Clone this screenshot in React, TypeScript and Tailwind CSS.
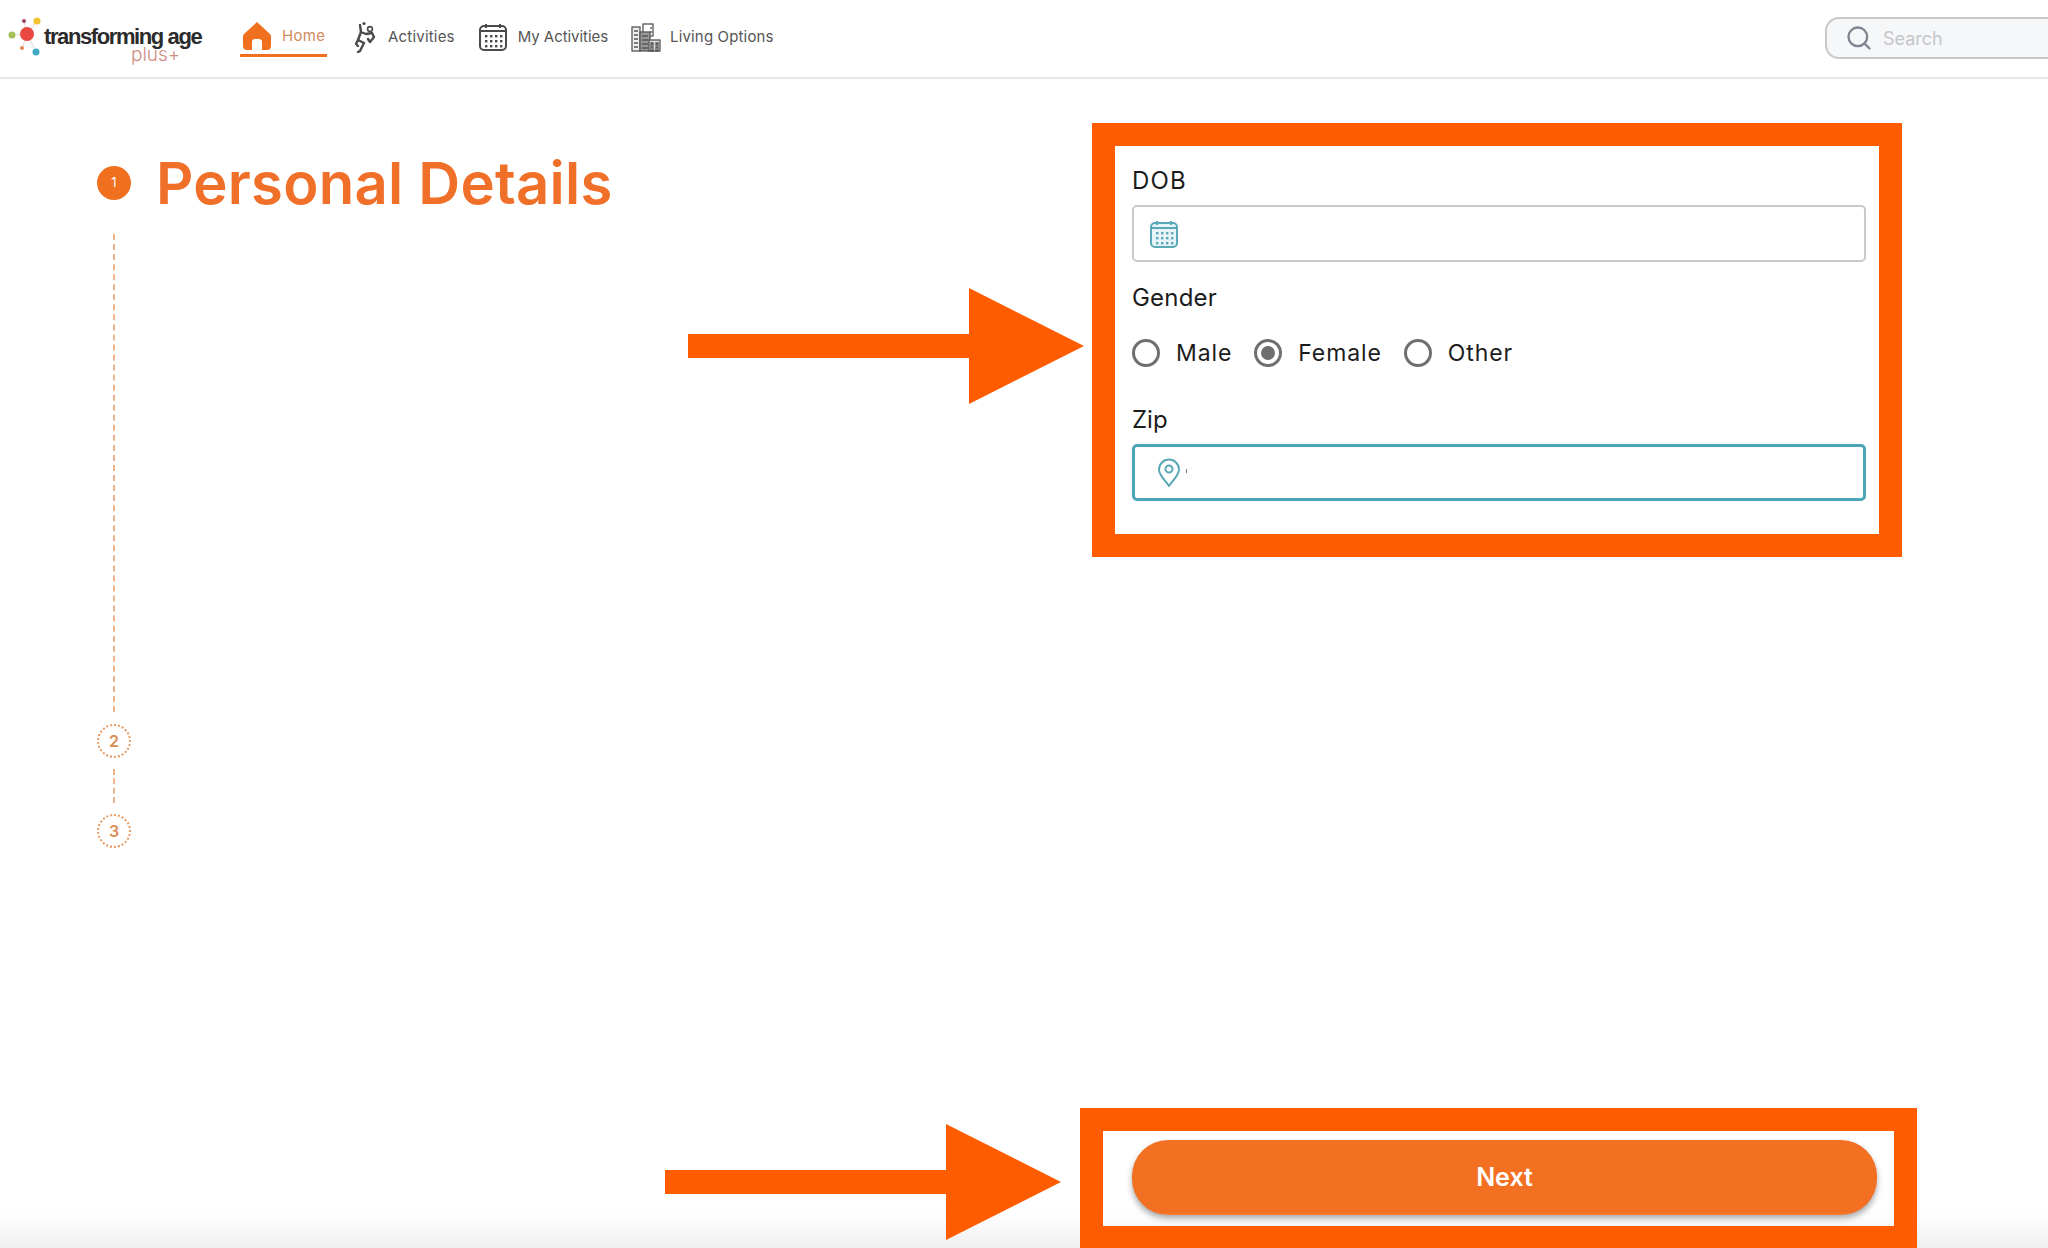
import React from 'react';
import { Search } from 'lucide-react';

const Logo = () => (
  <div className="relative w-[210px] h-[78px] shrink-0">
    <svg className="absolute left-0 top-0" width="50" height="70" viewBox="0 0 50 70">
      <g stroke="#e9d6cf" strokeWidth="1">
        <line x1="27" y1="34" x2="37" y2="21" />
        <line x1="27" y1="34" x2="24" y2="21" />
        <line x1="27" y1="34" x2="12" y2="35" />
        <line x1="27" y1="34" x2="22" y2="48" />
        <line x1="27" y1="34" x2="36" y2="52" />
      </g>
      <circle cx="27" cy="34" r="7" fill="#e8483f" />
      <circle cx="37" cy="21" r="3.5" fill="#f2c230" />
      <circle cx="24" cy="21" r="2" fill="#a3405f" />
      <circle cx="12" cy="35" r="3.5" fill="#a3bf55" />
      <circle cx="22" cy="48" r="2" fill="#e58a4e" />
      <circle cx="36" cy="52" r="3.5" fill="#3fa9c4" />
    </svg>
    <span className="absolute left-[44px] top-[27px] font-['Liberation_Sans',sans-serif] text-[22px] leading-[20px] font-bold tracking-[-1.4px] text-[#2b2b2b] whitespace-nowrap">
      transforming age
    </span>
    <span className="absolute left-[131px] top-[47px] font-['Inter',sans-serif] text-[19px] leading-[16px] font-light text-[#cf8b82] whitespace-nowrap">
      plus+
    </span>
  </div>
);

const HomeIcon = () => (
  <svg width="30" height="30" viewBox="0 0 30 30" fill="#f0701f">
    <path d="M15 1 L28 13 Q29 14 29 16 V25 Q29 29 25 29 H20 V21 Q20 18 17 18 H13 Q10 18 10 21 V29 H5 Q1 29 1 25 V16 Q1 14 2 13 Z" />
  </svg>
);

const RunnerIcon = () => (
  <svg width="22" height="32" viewBox="0 0 22 32" fill="none" stroke="#4a4a4a" strokeWidth="2.4" strokeLinejoin="round" strokeLinecap="round">
    <circle cx="9" cy="2.5" r="1.6" fill="#4a4a4a" strokeWidth="0" />
    <circle cx="15" cy="8" r="2.4" strokeWidth="1.6" />
    <path d="M5 4 L6 11 L11 13 L17 12 L19 16 L15 21 L13 18" />
    <path d="M6 11 L3 19 L9 22 L5 30 L3 31" />
    <path d="M3 19 L1 23 L3 25" />
  </svg>
);

const CalendarIcon = ({ color, fill }: { color: string; fill: string }) => (
  <svg width="30" height="30" viewBox="0 0 30 30" fill={fill} stroke={color} strokeWidth="2">
    <rect x="2" y="4" width="26" height="24" rx="4" />
    <line x1="2" y1="9" x2="28" y2="9" />
    <line x1="8" y1="2" x2="8" y2="6" />
    <line x1="22" y1="2" x2="22" y2="6" />
    <g fill={color} stroke="none">
      {[13, 18, 23].map((y) =>
        [7, 12, 17, 22].map((x) => <rect key={`${x}-${y}`} x={x} y={y} width="2.4" height="2.4" />)
      )}
    </g>
  </svg>
);

const BuildingsIcon = () => (
  <svg width="30" height="30" viewBox="0 0 30 30" fill="none" stroke="#555" strokeWidth="1.3">
    <rect x="1" y="5" width="8" height="24" fill="#eee" />
    <rect x="12" y="2" width="10" height="12" />
    <rect x="9" y="10" width="10" height="19" fill="#999" />
    <rect x="18" y="18" width="11" height="11" fill="#ddd" />
    <path d="M3 9h4M3 13h4M3 17h4M3 21h4M3 25h4M11 14h6M11 18h6M11 22h6M11 26h6" />
    <path d="M20 21h2v2h-2zM25 21h2v2h-2zM20 25h2v4h-2zM25 25h2v4h-2zM20 5v2M20 9v2" />
  </svg>
);

const PinIcon = () => (
  <svg width="24" height="30" viewBox="0 0 24 30" fill="none" stroke="#58a8b6" strokeWidth="2">
    <path d="M12 28 C7 21 2 17 2 11.5 A10 10 0 0 1 22 11.5 C22 17 17 21 12 28 Z" strokeLinejoin="round" />
    <circle cx="12" cy="11" r="3.5" />
  </svg>
);

const NavItem = ({ icon, label, className }: { icon: React.ReactNode; label: string; className: string }) => (
  <div className={`flex items-center text-[15px] ${className}`}>
    {icon}
    <span className="whitespace-nowrap">{label}</span>
  </div>
);

const Radio = ({ label, checked }: { label: string; checked?: boolean }) => (
  <label className="flex items-center gap-[16px]">
    <span className="w-[28px] h-[28px] rounded-full border-[3px] border-[#6f6f6f] flex items-center justify-center">
      {checked && <span className="w-[14px] h-[14px] rounded-full bg-[#6f6f6f]" />}
    </span>
    <span className="text-[23px] leading-[28px] tracking-[0.9px] text-[#1c1c1c]">{label}</span>
  </label>
);

const Arrow = ({ className }: { className: string }) => (
  <svg className={`absolute ${className}`} width="396" height="116" viewBox="0 0 396 116" fill="#ff5c00">
    <path d="M0 46 H281 V0 L396 58 L281 116 V70 H0 Z" />
  </svg>
);

export default function App() {
  return (
    <div className="relative h-screen w-full overflow-hidden bg-white font-['Inter',sans-serif] flex flex-col">
      {/* Header */}
      <header className="h-[79px] shrink-0 border-b-2 border-[#e6e6e6] flex items-start">
        <Logo />
        <nav className="flex items-start gap-[23px] pt-[19px] ml-[30px]">
          <div className="flex flex-col border-b-[3px] border-[#f0701f] pb-[1px] pl-[2px] w-[87px] mr-[5px]">
            <NavItem label="Home" icon={<HomeIcon />} className="h-[34px] gap-[10px] tracking-[0.35px] text-[#d08a5c]" />
          </div>
          <NavItem label="Activities" icon={<RunnerIcon />} className="h-[36px] gap-[11px] tracking-[0.2px] text-[#555555]" />
          <NavItem label="My Activities" icon={<CalendarIcon color="#4a4a4a" fill="none" />} className="h-[36px] gap-[10px] tracking-[-0.05px] text-[#555555]" />
          <NavItem label="Living Options" icon={<BuildingsIcon />} className="h-[36px] gap-[9px] tracking-[0.15px] text-[#555555]" />
        </nav>
        <div className="ml-auto mt-[17px] w-[223px] h-[42px] rounded-l-[14px] border-2 border-r-0 border-[#c8c8c8] bg-[#f6f7f9] flex items-center pl-[18px] gap-[10px]">
          <Search size={28} strokeWidth={2} className="text-[#7f8590]" />
          <span className="text-[18px] text-[#c4c6ca]">Search</span>
        </div>
      </header>

      {/* Main */}
      <main className="flex flex-1 min-h-0">
        <aside className="w-[1132px] shrink-0 pl-[97px] pt-[78px]">
          <div className="flex items-center gap-[25px] h-[52px]">
            <div className="w-[34px] h-[34px] rounded-full bg-[#f0701f] text-white text-[13px] flex items-center justify-center">1</div>
            <h1 className="text-[58px] leading-[52px] font-semibold tracking-[0.25px] text-[#f0702a] whitespace-nowrap">Personal Details</h1>
          </div>
          <div className="w-[34px] flex flex-col items-center">
            <div className="h-[478px] mt-[25px] border-l-2 border-dashed border-[#ecb48c]" />
            <div className="mt-[12px] w-[34px] h-[34px] rounded-full border-2 border-dotted border-[#e89a63] text-[#d98c55] text-[16px] font-semibold flex items-center justify-center">2</div>
            <div className="h-[34px] my-[11px] border-l-2 border-dashed border-[#ecb48c]" />
            <div className="w-[34px] h-[34px] rounded-full border-2 border-dotted border-[#e89a63] text-[#d98c55] text-[16px] font-semibold flex items-center justify-center">3</div>
          </div>
        </aside>

        <section className="w-[745px] shrink-0 flex flex-col pt-[88px]">
          <div className="w-[734px] flex flex-col text-[#1c1c1c]">
            <div className="text-[24px] leading-[28px] tracking-[1.2px]">DOB</div>
            <div className="mt-[10px] h-[57px] rounded-[5px] border-2 border-[#c9c9c9] flex items-center pl-[15px]">
              <CalendarIcon color="#5aa9b8" fill="#e8f4f7" />
            </div>
            <div className="mt-[22px] text-[24px] leading-[28px] tracking-[0.2px]">Gender</div>
            <div className="mt-[27px] flex items-center gap-[22px]">
              <Radio label="Male" />
              <Radio label="Female" checked />
              <Radio label="Other" />
            </div>
            <div className="pt-[39px] text-[24px] leading-[28px]">Zip</div>
            <div className="mt-[10px] h-[57px] rounded-[5px] border-[3px] border-[#4ea5b8] flex items-center pl-[22px] gap-[5px]">
              <PinIcon />
              <span className="w-px h-[4px] bg-[#777] -mt-[4px]" />
            </div>
          </div>
          <button className="mt-[639px] w-[745px] h-[75px] shrink-0 rounded-[36px] bg-[#f37022] text-white text-[25px] font-semibold shadow-[0_4px_6px_rgba(0,0,0,0.35)]">
            Next
          </button>
        </section>
      </main>

      {/* Bottom shade */}
      <div className="absolute left-0 right-0 bottom-0 h-[36px] bg-gradient-to-b from-transparent to-[#efefef] pointer-events-none" />

      {/* Annotations over the screenshot */}
      <div className="absolute left-[1092px] top-[123px] w-[810px] h-[434px] border-[23px] border-[#ff5c00]" />
      <div className="absolute left-[1080px] top-[1108px] w-[837px] h-[160px] border-x-[23px] border-t-[23px] border-b-[42px] border-[#ff5c00]" />
      <Arrow className="left-[688px] top-[288px]" />
      <Arrow className="left-[665px] top-[1124px]" />
    </div>
  );
}
